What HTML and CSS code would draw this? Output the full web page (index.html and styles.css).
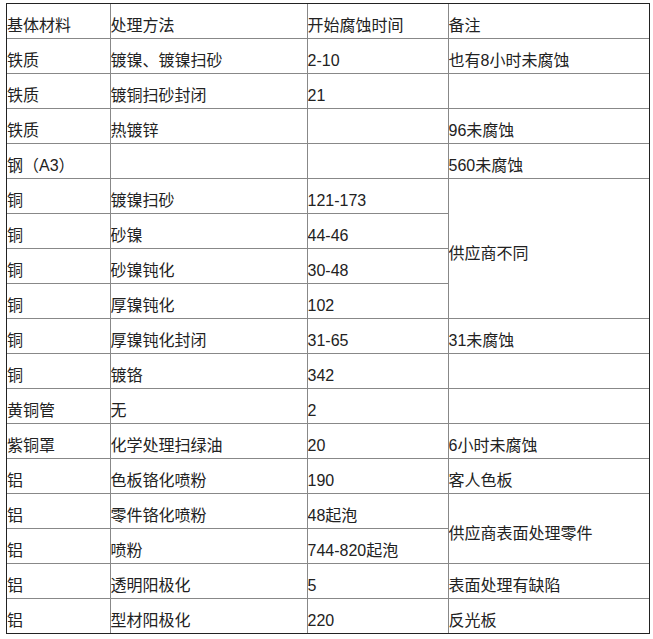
FILE: index.html
```html
<!DOCTYPE html>
<html lang="zh-CN">
<head>
<meta charset="utf-8">
<link rel="stylesheet" href="styles.css">
</head>
<body>
<div class="wrap">
<table class="grid">
<colgroup><col class="c1"><col class="c2"><col class="c3"><col class="c4"></colgroup>
<tbody>
<tr><td>基体材料</td><td>处理方法</td><td>开始腐蚀时间</td><td>备注</td></tr>
<tr><td>铁质</td><td>镀镍、镀镍扫砂</td><td>2-10</td><td>也有8小时未腐蚀</td></tr>
<tr><td>铁质</td><td>镀铜扫砂封闭</td><td>21</td><td></td></tr>
<tr><td>铁质</td><td>热镀锌</td><td></td><td>96未腐蚀</td></tr>
<tr><td>钢（A3）</td><td></td><td></td><td>560未腐蚀</td></tr>
<tr><td>铜</td><td>镀镍扫砂</td><td>121-173</td><td rowspan="4">供应商不同</td></tr>
<tr><td>铜</td><td>砂镍</td><td>44-46</td></tr>
<tr><td>铜</td><td>砂镍钝化</td><td>30-48</td></tr>
<tr><td>铜</td><td>厚镍钝化</td><td>102</td></tr>
<tr><td>铜</td><td>厚镍钝化封闭</td><td>31-65</td><td>31未腐蚀</td></tr>
<tr><td>铜</td><td>镀铬</td><td>342</td><td></td></tr>
<tr><td>黄铜管</td><td>无</td><td>2</td><td></td></tr>
<tr><td>紫铜罩</td><td>化学处理扫绿油</td><td>20</td><td>6小时未腐蚀</td></tr>
<tr><td>铝</td><td>色板铬化喷粉</td><td>190</td><td>客人色板</td></tr>
<tr><td>铝</td><td>零件铬化喷粉</td><td>48起泡</td><td rowspan="2">供应商表面处理零件</td></tr>
<tr><td>铝</td><td>喷粉</td><td>744-820起泡</td></tr>
<tr><td>铝</td><td>透明阳极化</td><td>5</td><td>表面处理有缺陷</td></tr>
<tr><td>铝</td><td>型材阳极化</td><td>220</td><td>反光板</td></tr>
</tbody>
</table>
</div>
</body>
</html>
```

FILE: styles.css
```css
html, body {
  margin: 0;
  padding: 0;
  background: #ffffff;
}
body {
  font-family: "Liberation Sans", "Noto Sans CJK SC", sans-serif;
  font-size: 16px;
  color: #222222;
}
.wrap {
  margin: 3px 0 0 6px;
  width: 642px;
  border: 1px solid #222222;
}
.grid {
  width: 642px;
  table-layout: fixed;
  border-collapse: collapse;
  border-style: hidden;
}
.c1 { width: 103px; }
.c2 { width: 197px; }
.c3 { width: 141px; }
.c4 { width: 201px; }
.grid td {
  border: 1px solid #888888;
  padding: 10px 0 0 0;
  height: 24px;
  line-height: 24px;
  vertical-align: middle;
  white-space: nowrap;
  overflow: hidden;
}
```
